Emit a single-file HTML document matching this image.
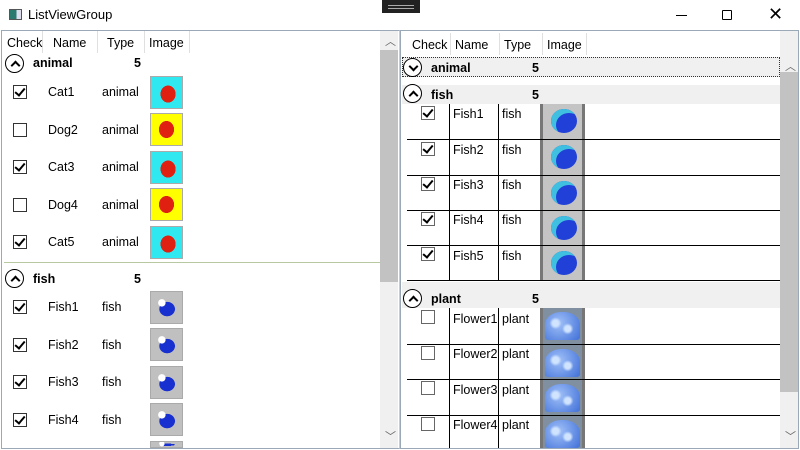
<!DOCTYPE html>
<html><head><meta charset="utf-8"><style>
*{margin:0;padding:0;box-sizing:border-box}
body{width:800px;height:450px;background:#fff;font-family:"Liberation Sans",sans-serif;font-size:12.5px;color:#000;position:relative;overflow:hidden}
.a{position:absolute}
.t{position:absolute;white-space:nowrap}
.cb{position:absolute;width:14px;height:14px;border:1px solid #333;background:#fff}
.cb.on::after{content:"";position:absolute;left:3px;top:0px;width:4px;height:8px;border:solid #000;border-width:0 2px 2px 0;transform:rotate(40deg)}
.rcb{position:absolute;width:14px;height:14px;border:1px solid #666;background:#fff}
.rcb.on::after{content:"";position:absolute;left:3px;top:0px;width:4px;height:8px;border:solid #000;border-width:0 2px 2px 0;transform:rotate(40deg)}
.circ{position:absolute;width:19px;height:19px;border:1.3px solid #000;border-radius:50%;background:#fff}
.circ::after{content:"";position:absolute;left:5.5px;top:6.5px;width:5px;height:5px;border:solid #000;border-width:2px 0 0 2px;transform:rotate(45deg)}
.circ.dn::after{top:3.5px;transform:rotate(225deg)}
.b{font-weight:bold}
.cat{background:radial-gradient(ellipse 40% 45% at 55% 55%,#e02010 60%,transparent 62%),#30e8f0;border:1px solid #aaa}
.dog{background:radial-gradient(ellipse 40% 45% at 50% 50%,#e02010 60%,transparent 62%),#ffff00;border:1px solid #aaa}
.fish{background:radial-gradient(circle at 35% 35%,#fff 12%,transparent 14%),radial-gradient(ellipse 38% 35% at 52% 55%,#1830d0 65%,transparent 68%),#c0c0c0;border:1px solid #aaa}
.hv{position:absolute;top:0;height:22px;width:1px;background:#e0e0e0}
.bl{position:absolute;background:#000}
.rimg{position:absolute;width:45px;border-left:3px solid #777;border-right:3px solid #777;background:#c4c4c4}
.rimg.f::after{content:"";position:absolute;left:8px;top:5px;width:26px;height:24px;border-radius:50%;background:#2040d8;box-shadow:inset 5px 4px 0 #40c0e0}
.rimg.p{background:#8090a0}
.rimg.p::after{content:"";position:absolute;left:2px;top:4px;width:35px;height:28px;border-radius:45% 45% 10% 10%;background:radial-gradient(circle at 30% 40%,#d0e4ff 10%,transparent 20%),radial-gradient(circle at 65% 60%,#d0e4ff 10%,transparent 20%),radial-gradient(circle at 40% 40%,#a0c0f8,#4070d8)}
.ar{position:absolute;color:#666;font-size:11px}
</style></head><body>
<div class="a" style="left:0;top:0;width:800px;height:30px;background:#fff"></div>
<div class="a" style="left:9px;top:9px;width:13px;height:11px;border:1px solid #555;background:linear-gradient(90deg,#2a7a70 0 60%,#dde 60%)"></div>
<div class="t" style="left:28px;top:7px;font-size:13px">ListViewGroup</div>
<div class="a" style="left:382px;top:0;width:38px;height:13px;background:#222"></div>
<div class="a" style="left:388px;top:5px;width:26px;height:1px;background:#aaa"></div>
<div class="a" style="left:388px;top:8px;width:26px;height:1px;background:#aaa"></div>
<div class="a" style="left:676px;top:15px;width:11px;height:1px;background:#000"></div>
<div class="a" style="left:722px;top:10px;width:10px;height:10px;border:1px solid #000;border-radius:1px"></div>
<div class="t" style="left:768px;top:4px;font-size:18px;font-weight:300">✕</div>

<div class="a" style="left:1px;top:30px;width:399px;height:419px;border:1px solid #9aa8b8;border-right:1px solid #ccc"></div>
<div class="a" style="left:2px;top:31px;width:378px;height:22px;background:#fff">
<div class="hv" style="left:40px"></div><div class="hv" style="left:95px"></div><div class="hv" style="left:142px"></div><div class="hv" style="left:187px"></div>
</div>
<div class="t" style="left:7px;top:36px">Check</div><div class="t" style="left:53px;top:36px">Name</div><div class="t" style="left:107px;top:36px">Type</div><div class="t" style="left:149px;top:36px">Image</div>
<div class="a" style="left:380px;top:31px;width:18px;height:417px;background:#f0f0f0"></div>
<div class="a" style="left:380px;top:50px;width:18px;height:232px;background:#c2c2c2"></div>
<div class="ar" style="left:385px;top:33px">︿</div>
<div class="ar" style="left:385px;top:428px">﹀</div>

<div class="circ" style="left:5px;top:54px"></div><div class="t b" style="left:33px;top:56px">animal</div><div class="t b" style="left:134px;top:56px">5</div>
<div class="cb on" style="left:13px;top:85px"></div><div class="t" style="left:48px;top:85px">Cat1</div><div class="t" style="left:102px;top:85px">animal</div><div class="a cat" style="left:150px;top:76px;width:33px;height:33px"></div>
<div class="cb" style="left:13px;top:123px"></div><div class="t" style="left:48px;top:123px">Dog2</div><div class="t" style="left:102px;top:123px">animal</div><div class="a dog" style="left:150px;top:113px;width:33px;height:33px"></div>
<div class="cb on" style="left:13px;top:160px"></div><div class="t" style="left:48px;top:160px">Cat3</div><div class="t" style="left:102px;top:160px">animal</div><div class="a cat" style="left:150px;top:151px;width:33px;height:33px"></div>
<div class="cb" style="left:13px;top:198px"></div><div class="t" style="left:48px;top:198px">Dog4</div><div class="t" style="left:102px;top:198px">animal</div><div class="a dog" style="left:150px;top:188px;width:33px;height:33px"></div>
<div class="cb on" style="left:13px;top:235px"></div><div class="t" style="left:48px;top:235px">Cat5</div><div class="t" style="left:102px;top:235px">animal</div><div class="a cat" style="left:150px;top:226px;width:33px;height:33px"></div>
<div class="a" style="left:4px;top:262px;width:376px;height:1px;background:#b8c8a0"></div>
<div class="circ" style="left:5px;top:269px"></div><div class="t b" style="left:33px;top:272px">fish</div><div class="t b" style="left:134px;top:272px">5</div>
<div class="cb on" style="left:13px;top:300px"></div><div class="t" style="left:48px;top:300px">Fish1</div><div class="t" style="left:102px;top:300px">fish</div><div class="a fish" style="left:150px;top:291px;width:33px;height:33px"></div>
<div class="cb on" style="left:13px;top:338px"></div><div class="t" style="left:48px;top:338px">Fish2</div><div class="t" style="left:102px;top:338px">fish</div><div class="a fish" style="left:150px;top:328px;width:33px;height:33px"></div>
<div class="cb on" style="left:13px;top:375px"></div><div class="t" style="left:48px;top:375px">Fish3</div><div class="t" style="left:102px;top:375px">fish</div><div class="a fish" style="left:150px;top:366px;width:33px;height:33px"></div>
<div class="cb on" style="left:13px;top:413px"></div><div class="t" style="left:48px;top:413px">Fish4</div><div class="t" style="left:102px;top:413px">fish</div><div class="a fish" style="left:150px;top:403px;width:33px;height:33px"></div>
<div class="a fish" style="left:150px;top:441px;width:33px;height:7px"></div>

<div class="a" style="left:400px;top:30px;width:399px;height:419px;border:1px solid #9aa8b8"></div>
<div class="t" style="left:412px;top:38px">Check</div><div class="t" style="left:455px;top:38px">Name</div><div class="t" style="left:504px;top:38px">Type</div><div class="t" style="left:547px;top:38px">Image</div>
<div class="a" style="left:450px;top:33px;width:1px;height:22px;background:#e0e0e0"></div><div class="a" style="left:499px;top:33px;width:1px;height:22px;background:#e0e0e0"></div><div class="a" style="left:542px;top:33px;width:1px;height:22px;background:#e0e0e0"></div><div class="a" style="left:586px;top:33px;width:1px;height:22px;background:#e0e0e0"></div>
<div class="a" style="left:780px;top:31px;width:18px;height:417px;background:#f0f0f0"></div>
<div class="a" style="left:780px;top:72px;width:18px;height:320px;background:#c2c2c2"></div>
<div class="ar" style="left:785px;top:58px">︿</div>
<div class="ar" style="left:785px;top:428px">﹀</div>

<div class="a" style="left:402px;top:57px;width:378px;height:20px;background:#f0f0f0;border:1px dotted #333"></div>
<div class="circ dn" style="left:403px;top:58px"></div><div class="t b" style="left:431px;top:61px">animal</div><div class="t b" style="left:532px;top:61px">5</div>

<div class="a" style="left:402px;top:85px;width:378px;height:19px;background:#f0f0f0"></div>
<div class="circ" style="left:403px;top:84px"></div><div class="t b" style="left:431px;top:88px">fish</div><div class="t b" style="left:532px;top:88px">5</div>

<div class="a" style="left:402px;top:282px;width:378px;height:26px;background:#f0f0f0"></div>
<div class="circ" style="left:403px;top:289px"></div><div class="t b" style="left:431px;top:292px">plant</div><div class="t b" style="left:532px;top:292px">5</div>

<div class="bl" style="left:449px;top:104px;width:1px;height:176px"></div>
<div class="bl" style="left:498px;top:104px;width:1px;height:176px"></div>
<div class="rimg f" style="left:540px;top:104px;height:35px"></div>
<div class="rimg f" style="left:540px;top:140px;height:35px"></div>
<div class="rimg f" style="left:540px;top:176px;height:34px"></div>
<div class="rimg f" style="left:540px;top:211px;height:34px"></div>
<div class="rimg f" style="left:540px;top:246px;height:34px"></div>
<div class="bl" style="left:407px;top:139px;width:373px;height:1px"></div>
<div class="bl" style="left:407px;top:175px;width:373px;height:1px"></div>
<div class="bl" style="left:407px;top:210px;width:373px;height:1px"></div>
<div class="bl" style="left:407px;top:245px;width:373px;height:1px"></div>
<div class="bl" style="left:407px;top:280px;width:373px;height:1px"></div>
<div class="rcb on" style="left:421px;top:106px"></div><div class="t" style="left:453px;top:107px">Fish1</div><div class="t" style="left:502px;top:107px">fish</div>
<div class="rcb on" style="left:421px;top:142px"></div><div class="t" style="left:453px;top:143px">Fish2</div><div class="t" style="left:502px;top:143px">fish</div>
<div class="rcb on" style="left:421px;top:177px"></div><div class="t" style="left:453px;top:178px">Fish3</div><div class="t" style="left:502px;top:178px">fish</div>
<div class="rcb on" style="left:421px;top:212px"></div><div class="t" style="left:453px;top:213px">Fish4</div><div class="t" style="left:502px;top:213px">fish</div>
<div class="rcb on" style="left:421px;top:247px"></div><div class="t" style="left:453px;top:249px">Fish5</div><div class="t" style="left:502px;top:249px">fish</div>

<div class="bl" style="left:449px;top:308px;width:1px;height:140px"></div>
<div class="bl" style="left:498px;top:308px;width:1px;height:140px"></div>
<div class="rimg p" style="left:540px;top:308px;height:36px"></div>
<div class="rimg p" style="left:540px;top:345px;height:34px"></div>
<div class="rimg p" style="left:540px;top:380px;height:35px"></div>
<div class="rimg p" style="left:540px;top:416px;height:32px"></div>
<div class="bl" style="left:407px;top:344px;width:373px;height:1px"></div>
<div class="bl" style="left:407px;top:379px;width:373px;height:1px"></div>
<div class="bl" style="left:407px;top:415px;width:373px;height:1px"></div>
<div class="rcb" style="left:421px;top:310px"></div><div class="t" style="left:453px;top:312px">Flower1</div><div class="t" style="left:502px;top:312px">plant</div>
<div class="rcb" style="left:421px;top:346px"></div><div class="t" style="left:453px;top:347px">Flower2</div><div class="t" style="left:502px;top:347px">plant</div>
<div class="rcb" style="left:421px;top:381px"></div><div class="t" style="left:453px;top:383px">Flower3</div><div class="t" style="left:502px;top:383px">plant</div>
<div class="rcb" style="left:421px;top:417px"></div><div class="t" style="left:453px;top:418px">Flower4</div><div class="t" style="left:502px;top:418px">plant</div>
</body></html>
